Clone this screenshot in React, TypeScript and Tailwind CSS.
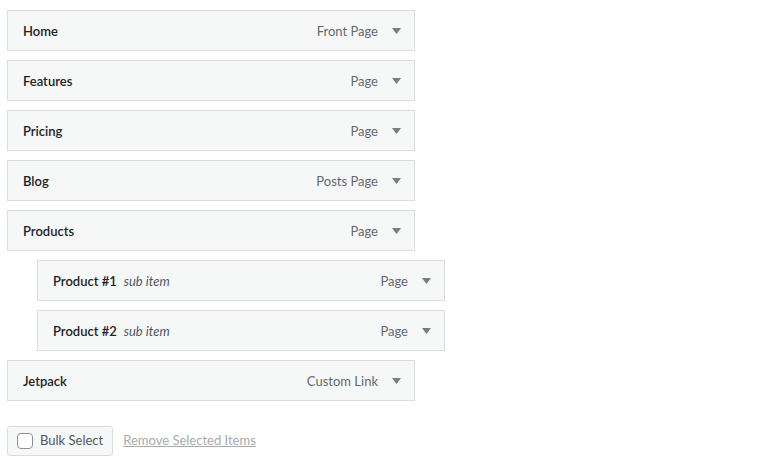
const items = [
  { title: 'Home', type: 'Front Page' },
  { title: 'Features', type: 'Page' },
  { title: 'Pricing', type: 'Page' },
  { title: 'Blog', type: 'Posts Page' },
  { title: 'Products', type: 'Page' },
  { title: 'Product #1', type: 'Page', sub: true },
  { title: 'Product #2', type: 'Page', sub: true },
  { title: 'Jetpack', type: 'Custom Link' },
];

function Arrow() {
  return (
    <svg width="9" height="6" viewBox="0 0 9 6" className="shrink-0">
      <path d="M0 0 H9 L4.5 6 Z" fill="#787c82" />
    </svg>
  );
}

export default function App() {
  return (
    <div className="min-h-[471px] bg-white pl-[7px] pt-[10px] font-['Lato',sans-serif] text-[13px]">
      <ul className="flex flex-col gap-[9px]">
        {items.map((item) => (
          <li
            key={item.title}
            className={`flex h-[41px] w-[408px] items-center border border-[#dcdcde] bg-[#f6f7f7] pl-[15px] pr-[13px] ${item.sub ? 'ml-[30px]' : ''}`}
          >
            <span className="pt-[2px] font-semibold text-[#1d2327]">{item.title}</span>
            {item.sub && <span className="ml-[7px] pt-[2px] italic text-[#50575e]">sub item</span>}
            <span className="ml-auto mr-[14px] pt-[2px] text-[#646970]">{item.type}</span>
            <Arrow />
          </li>
        ))}
      </ul>
      <div className="mt-[25px] flex items-center gap-[10px]">
        <label className="flex h-[30px] items-center gap-[7px] rounded-[3px] border border-[#dcdcde] bg-[#f6f7f7] pl-[9px] pr-[9px] text-[#50575e]">
          <span className="h-[16px] w-[16px] rounded-[4px] border border-[#8c8f94] bg-white" />
          Bulk Select
        </label>
        <span className="text-[#a7aaad] underline">Remove Selected Items</span>
      </div>
    </div>
  );
}
